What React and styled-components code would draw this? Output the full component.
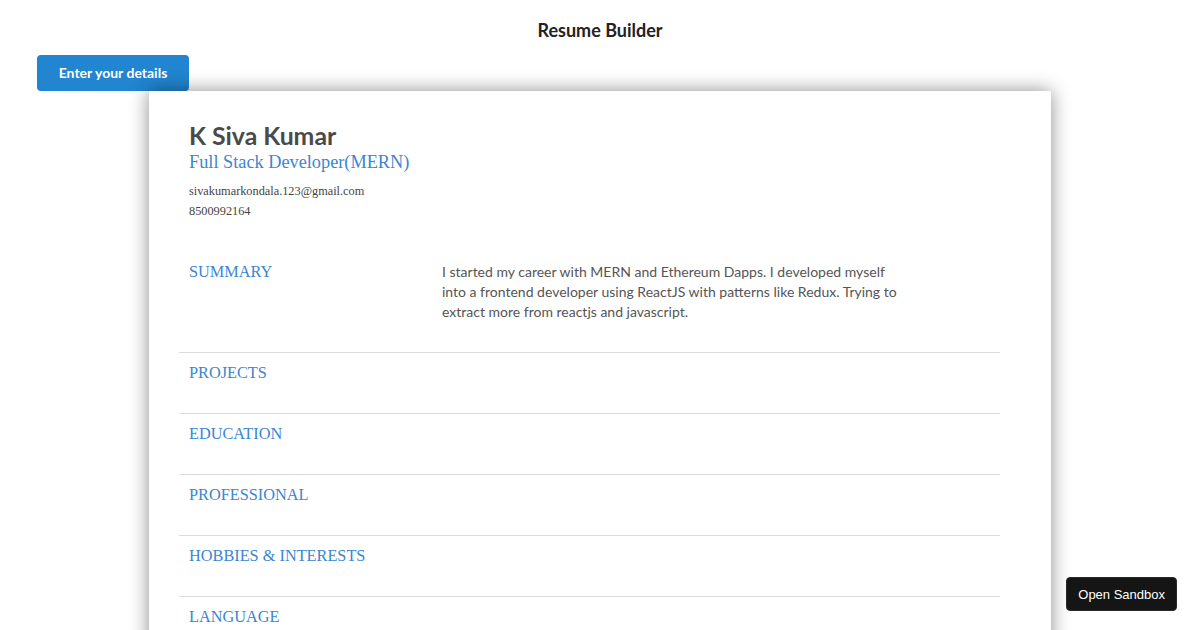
import React from "react";
import styled, { createGlobalStyle } from "styled-components";

const GlobalStyle = createGlobalStyle`
  body {
    margin: 0;
    background: #fff;
    font-family: Lato, "Helvetica Neue", Arial, sans-serif;
    font-size: 14px;
    color: rgba(0, 0, 0, 0.87);
  }
`;

const Page = styled.div`
  height: 100vh;
  overflow: hidden;
`;

const Heading = styled.h1`
  margin: 0;
  padding-top: 19px;
  height: 36px;
  text-align: center;
  font-family: Lato, sans-serif;
  font-size: 18px;
  font-weight: 700;
  line-height: 22px;
  color: #222;
`;

const Toolbar = styled.div`
  padding-left: 37px;
`;

const Button = styled.button`
  display: block;
  width: 152px;
  height: 36px;
  padding: 0 0 2px;
  border: none;
  border-radius: 4px;
  background: #2185d0;
  color: #fff;
  font-family: Lato, sans-serif;
  font-size: 14px;
  font-weight: 700;
  cursor: pointer;
`;

const Paper = styled.div`
  width: 902px;
  margin: 0 auto;
  min-height: 600px;
  background: #fff;
  box-shadow: 0 0 18px rgba(0, 0, 0, 0.45);
  padding: 30px 51px 0 30px;
  box-sizing: border-box;
`;

const Header = styled.div`
  padding: 0 10px 31px;
`;

const Name = styled.div`
  font-family: Lato, sans-serif;
  font-size: 24.8px;
  font-weight: 700;
  line-height: 30px;
  color: #4a4a4a;
`;

const Role = styled.div`
  font-family: "Liberation Serif", serif;
  font-size: 18.3px;
  line-height: 22px;
  color: #3b86cf;
  margin-bottom: 8px;
`;

const Contact = styled.div`
  font-family: "Liberation Serif", serif;
  font-size: 12.3px;
  line-height: 20px;
  color: #444;
`;

const Row = styled.div`
  display: grid;
  grid-template-columns: 253px 470px;
  padding: 9px 10px 29px;
  border-top: ${(p) => (p.first ? "none" : "1px solid #dcdcdc")};
`;

const Label = styled.div`
  font-family: "Liberation Serif", serif;
  font-size: 16.3px;
  line-height: 22px;
  color: #3b86cf;
`;

const Text = styled.p`
  margin: 0 0 1px;
  padding-top: 1px;
  font-family: Lato, sans-serif;
  font-size: 14px;
  line-height: 20px;
  color: #555;
`;

const Sandbox = styled.button`
  position: fixed;
  right: 23px;
  bottom: 19px;
  height: 34px;
  padding: 0 11px;
  border: 1px solid #2a2a2a;
  border-radius: 4px;
  background: #151515;
  color: #fff;
  font-family: "Liberation Sans", Arial, sans-serif;
  font-size: 13px;
`;

const sections = [
  {
    title: "SUMMARY",
    body:
      "I started my career with MERN and Ethereum Dapps. I developed myself into a frontend developer using ReactJS with patterns like Redux. Trying to extract more from reactjs and javascript.",
  },
  { title: "PROJECTS" },
  { title: "EDUCATION" },
  { title: "PROFESSIONAL" },
  { title: "HOBBIES & INTERESTS" },
  { title: "LANGUAGE" },
];

const App = () => (
  <Page>
    <GlobalStyle />
    <Heading>Resume Builder</Heading>
    <Toolbar>
      <Button>Enter your details</Button>
    </Toolbar>
    <Paper>
      <Header>
        <Name>K Siva Kumar</Name>
        <Role>Full Stack Developer(MERN)</Role>
        <Contact>sivakumarkondala.123@gmail.com</Contact>
        <Contact>8500992164</Contact>
      </Header>
      {sections.map((s, i) => (
        <Row key={s.title} first={i === 0}>
          <Label>{s.title}</Label>
          {s.body && <Text>{s.body}</Text>}
        </Row>
      ))}
    </Paper>
    <Sandbox>Open Sandbox</Sandbox>
  </Page>
);

export default App;
